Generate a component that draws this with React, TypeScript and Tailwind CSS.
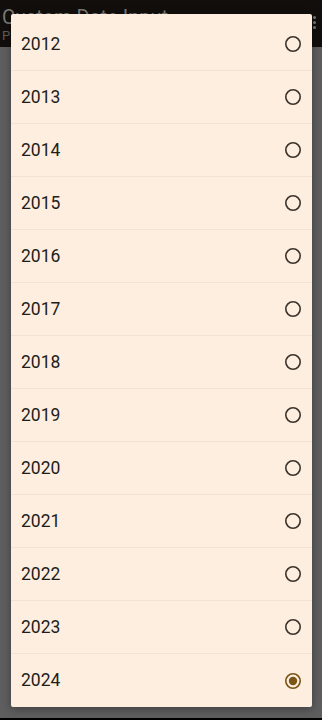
import React, { useState } from 'react';

const YEARS = [2012, 2013, 2014, 2015, 2016, 2017, 2018, 2019, 2020, 2021, 2022, 2023, 2024];

const Radio = ({ checked }: { checked: boolean }) => (
  <svg width="18" height="18" viewBox="0 0 18 18" className="shrink-0">
    <circle cx="9" cy="9" r="7.2" fill="none" stroke={checked ? '#7a5516' : '#3b322a'} strokeWidth="1.6" />
    {checked && <circle cx="9" cy="9" r="4.2" fill="#7a5516" />}
  </svg>
);

export default function App() {
  const [year, setYear] = useState(2024);

  return (
    <div className="relative w-[322px] h-[720px] overflow-hidden bg-[#5e5e5e] font-['Roboto','Liberation_Sans',sans-serif]">
      {/* dimmed app underneath */}
      <div className="h-[47px] bg-[#120e0b] pl-[2px] pt-[6px]">
        <div className="flex items-start justify-between">
          <div className="text-[20px] leading-[23px] font-normal text-[#7b7976]">Custom Date Input</div>
          <div className="flex flex-col gap-[2px] pr-[6px] pt-[10px]">
            <span className="w-[3px] h-[3px] rounded-full bg-[#7b7976]" />
            <span className="w-[3px] h-[3px] rounded-full bg-[#7b7976]" />
            <span className="w-[3px] h-[3px] rounded-full bg-[#7b7976]" />
          </div>
        </div>
        <div className="text-[13px] leading-[16px] text-[#5f5d5a] -mt-[1px]">Pick a date</div>
      </div>
      <div className="absolute left-0 right-0 bottom-0 h-[2px] bg-black" />

      {/* dialog */}
      <div className="absolute left-[11px] top-[14px] w-[301px] bg-[#fdeee0] rounded-[2px] shadow-[0_2px_8px_rgba(0,0,0,0.35)] pt-[4px]">
        {YEARS.map((y, i) => (
          <button
            key={y}
            onClick={() => setYear(y)}
            className={`flex w-full h-[53px] items-center justify-between pl-[10px] pr-[10px] text-left ${
              i < YEARS.length - 1 ? 'border-b border-[#f3e2d2]' : ''
            }`}
          >
            <span className="text-[17.5px] font-normal text-[#221d19]">{y}</span>
            <Radio checked={year === y} />
          </button>
        ))}
      </div>
    </div>
  );
}
